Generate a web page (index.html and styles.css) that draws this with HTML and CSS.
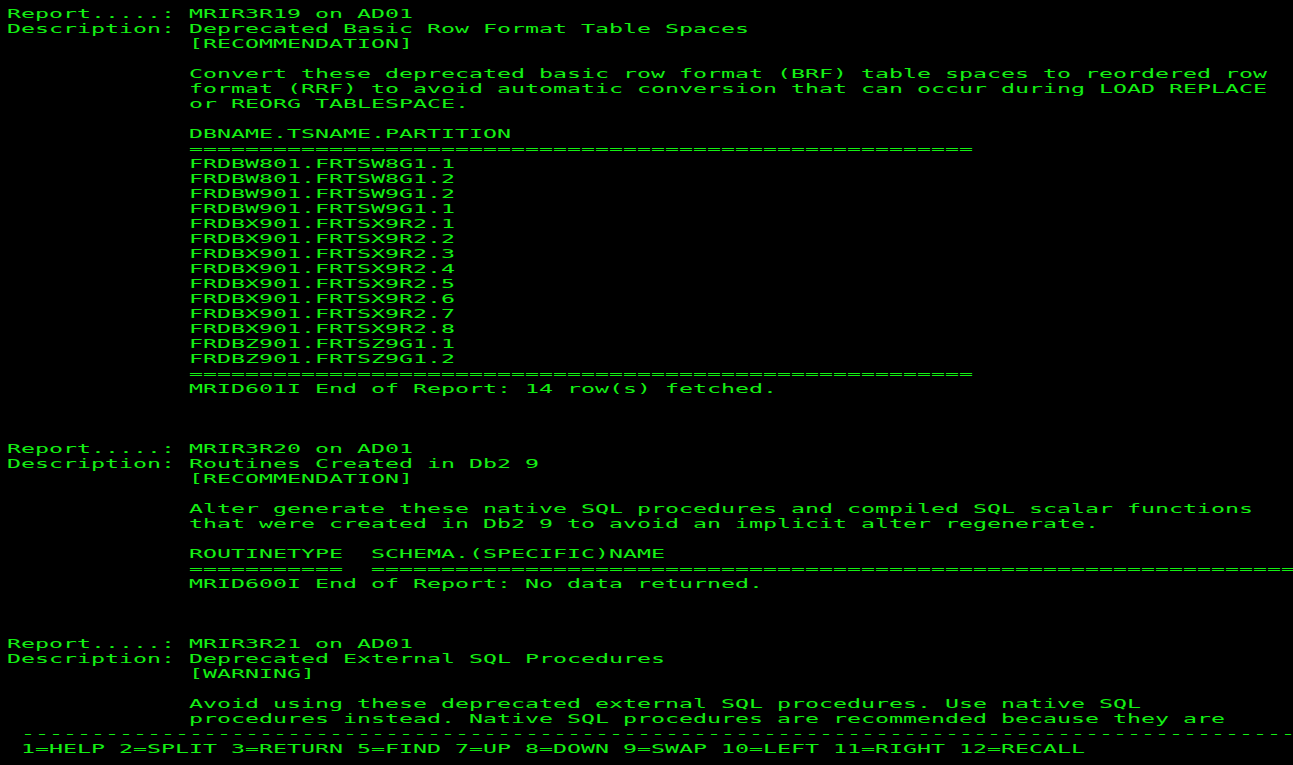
FILE: index.html
```html
<!DOCTYPE html>
<html lang="en">
<head>
<meta charset="utf-8">
<title>Db2 Migration Report</title>
<link rel="stylesheet" href="styles.css">
</head>
<body>
<main class="screen">
  <div class="term">
    <section class="report">
      <div class="line">Report.....: MRIR3R19 on AD01</div>
      <div class="line">Description: Deprecated Basic Row Format Table Spaces</div>
      <div class="line">             [RECOMMENDATION]</div>
      <div class="line"> </div>
      <div class="line">             Convert these deprecated basic row format (BRF) table spaces to reordered row</div>
      <div class="line">             format (RRF) to avoid automatic conversion that can occur during LOAD REPLACE</div>
      <div class="line">             or REORG TABLESPACE.</div>
      <div class="line"> </div>
      <div class="line">             DBNAME.TSNAME.PARTITION</div>
      <div class="line">             ========================================================</div>
      <div class="line">             FRDBW801.FRTSW8G1.1</div>
      <div class="line">             FRDBW801.FRTSW8G1.2</div>
      <div class="line">             FRDBW901.FRTSW9G1.2</div>
      <div class="line">             FRDBW901.FRTSW9G1.1</div>
      <div class="line">             FRDBX901.FRTSX9R2.1</div>
      <div class="line">             FRDBX901.FRTSX9R2.2</div>
      <div class="line">             FRDBX901.FRTSX9R2.3</div>
      <div class="line">             FRDBX901.FRTSX9R2.4</div>
      <div class="line">             FRDBX901.FRTSX9R2.5</div>
      <div class="line">             FRDBX901.FRTSX9R2.6</div>
      <div class="line">             FRDBX901.FRTSX9R2.7</div>
      <div class="line">             FRDBX901.FRTSX9R2.8</div>
      <div class="line">             FRDBZ901.FRTSZ9G1.1</div>
      <div class="line">             FRDBZ901.FRTSZ9G1.2</div>
      <div class="line">             ========================================================</div>
      <div class="line">             MRID601I End of Report: 14 row(s) fetched.</div>
      <div class="line"> </div>
      <div class="line"> </div>
      <div class="line"> </div>
    </section>
    <section class="report">
      <div class="line">Report.....: MRIR3R20 on AD01</div>
      <div class="line">Description: Routines Created in Db2 9</div>
      <div class="line">             [RECOMMENDATION]</div>
      <div class="line"> </div>
      <div class="line">             Alter generate these native SQL procedures and compiled SQL scalar functions</div>
      <div class="line">             that were created in Db2 9 to avoid an implicit alter regenerate.</div>
      <div class="line"> </div>
      <div class="line">             ROUTINETYPE  SCHEMA.(SPECIFIC)NAME</div>
      <div class="line">             ===========  ==================================================================</div>
      <div class="line">             MRID600I End of Report: No data returned.</div>
      <div class="line"> </div>
      <div class="line"> </div>
      <div class="line"> </div>
    </section>
    <section class="report">
      <div class="line">Report.....: MRIR3R21 on AD01</div>
      <div class="line">Description: Deprecated External SQL Procedures</div>
      <div class="line">             [WARNING]</div>
      <div class="line"> </div>
      <div class="line">             Avoid using these deprecated external SQL procedures. Use native SQL</div>
      <div class="line">             procedures instead. Native SQL procedures are recommended because they are</div>
    </section>
    <footer class="keys">
      <div class="line"> --------------------------------------------------------------------------------------------</div>
      <div class="line"> 1=HELP 2=SPLIT 3=RETURN 5=FIND 7=UP 8=DOWN 9=SWAP 10=LEFT 11=RIGHT 12=RECALL</div>
    </footer>
  </div>
</main>
</body>
</html>
```
FILE: styles.css
```css
html, body {
  margin: 0;
  padding: 0;
  background: #000;
}

.screen {
  box-sizing: border-box;
  width: 1293px;
  height: 765px;
  overflow: hidden;
  background: #000;
  padding: 7px 0 0 7px;
}

.term {
  font-family: "DejaVu Sans Mono", monospace;
  font-size: 12px;
  line-height: 15px;
  color: #14f014;
  transform: scaleX(1.9378);
  transform-origin: 0 0;
  width: 700px;
}

.line {
  white-space: pre;
  height: 15px;
}
```
